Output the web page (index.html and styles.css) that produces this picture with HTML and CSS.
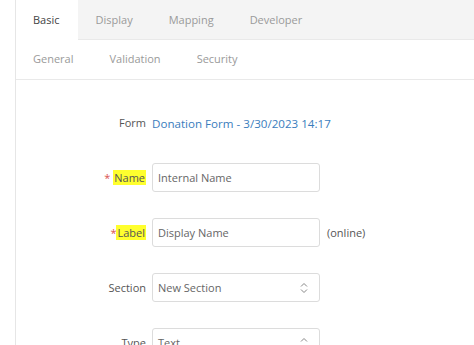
FILE: index.html
```html
<!DOCTYPE html>
<html lang="en">
<head>
  <meta charset="UTF-8">
  <title>Field Editor</title>
  <link rel="stylesheet" href="styles.css">
</head>
<body>
  <div class="panel">
    <div class="tabs">
      <div class="tab active">Basic</div>
      <div class="tab">Display</div>
      <div class="tab">Mapping</div>
      <div class="tab">Developer</div>
    </div>
    <div class="subtabs">
      <div class="subtab">General</div>
      <div class="subtab">Validation</div>
      <div class="subtab">Security</div>
    </div>
    <div class="fields">
      <div class="label">Form</div>
      <div class="value"><a href="#">Donation Form - 3/30/2023 14:17</a></div>

      <div class="label"><span class="req">*</span> <mark>Name</mark></div>
      <div class="input">Internal Name</div>
      <div></div>

      <div class="label"><span class="req">*</span><mark>Label</mark></div>
      <div class="input">Display Name</div>
      <div class="note">(online)</div>

      <div class="label">Section</div>
      <div class="input select">New Section
        <svg width="8" height="12" viewBox="0 0 8 12"><path d="M1 4.5 L4 1.5 L7 4.5 M1 7.5 L4 10.5 L7 7.5" fill="none" stroke="#888" stroke-width="1"/></svg>
      </div>
      <div></div>

      <div class="label">Type</div>
      <div class="input select">Text
        <svg width="8" height="12" viewBox="0 0 8 12"><path d="M1 4.5 L4 1.5 L7 4.5" fill="none" stroke="#888" stroke-width="1"/></svg>
      </div>
      <div></div>
    </div>
  </div>
</body>
</html>
```

FILE: styles.css
```css
body {
  margin: 0;
  background: #fff;
  font-family: "Open Sans", "Liberation Sans", sans-serif;
  font-size: 11px;
  color: #555;
}
.panel {
  margin-left: 15px;
  border-left: 1px solid #e6e6e6;
  height: 345px;
  overflow: hidden;
}
.tabs {
  display: flex;
  height: 39px;
  background: #f4f4f4;
  border-bottom: 1px solid #e9e9e9;
}
.tab {
  padding: 0 18px;
  line-height: 39px;
  color: #9a9a9a;
}
.tab.active {
  padding-left: 17px;
  background: #fff;
  color: #444;
  height: 40px;
}
.subtabs {
  display: flex;
  height: 39px;
  border-bottom: 1px solid #e9e9e9;
}
.subtab {
  padding: 0 18px 0 17px;
  line-height: 38px;
  color: #9a9a9a;
}
.subtab + .subtab {
  padding-left: 18px;
}
.fields {
  display: grid;
  grid-template-columns: 130px 168px auto;
  grid-auto-rows: 29px;
  row-gap: 26px;
  column-gap: 6px;
  padding-top: 28px;
  align-items: center;
}
.label {
  text-align: right;
  color: #555;
}
.req {
  color: #d9534f;
}
mark {
  background: #ffff2e;
  color: #555;
  padding: 0 1px;
}
.value {
  grid-column: span 2;
  font-size: 11.6px;
  white-space: nowrap;
  padding-top: 2px;
}
.value a {
  color: #3a7dbd;
  text-decoration: none;
}
.input {
  height: 29px;
  box-sizing: border-box;
  border: 1px solid #dcdcdc;
  border-radius: 3px;
  padding: 0 5px;
  line-height: 27px;
  color: #666;
  display: flex;
  justify-content: space-between;
  align-items: center;
}
.select svg {
  margin-right: 6px;
}
.note {
  padding-left: 1px;
  color: #555;
}
```
